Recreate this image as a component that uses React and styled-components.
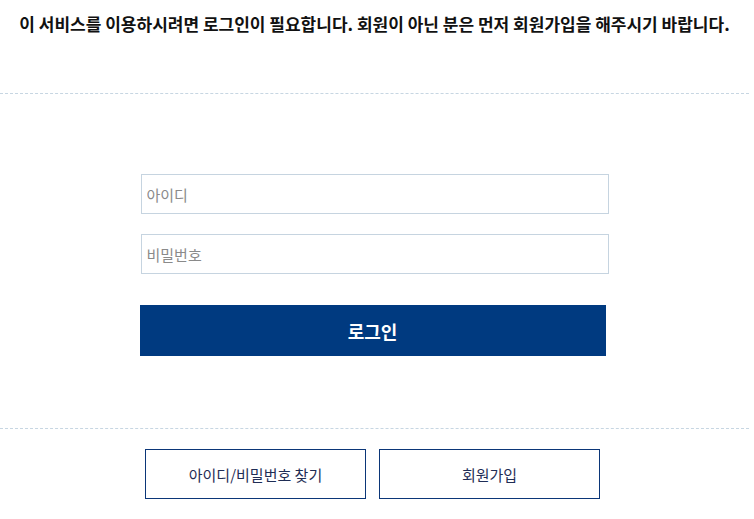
import React from "react";
import styled, { createGlobalStyle } from "styled-components";

const GlobalStyle = createGlobalStyle`
    html, body {
        margin: 0;
        padding: 0;
        background: #fff;
    }
    body {
        font-family: "Noto Sans CJK KR", "Noto Sans", sans-serif;
    }
`;

const Page = styled.div`
    width: 749px;
`;

const Notice = styled.p`
    margin: 0;
    height: 93px;
    box-sizing: border-box;
    padding-top: 11px;
    text-align: center;
    font-size: 17px;
    font-weight: 700;
    color: #111;
    line-height: 26px;
    white-space: nowrap;
`;

const Section = styled.div`
    border-top: 1px dashed #c7d6e2;
`;

const FormArea = styled.form`
    width: 468px;
    margin: 0 auto;
    padding: 80px 0 72px;
    display: flex;
    flex-direction: column;
`;

const Field = styled.input`
    width: 100%;
    height: 40px;
    box-sizing: border-box;
    border: 1px solid #c6d4e0;
    padding: 0 5px;
    margin-bottom: ${p => p.$gap}px;
    font-family: inherit;
    font-size: 15px;
    color: #333;
    outline: none;
    &::placeholder {
        color: #8a8a8a;
    }
`;

const SubmitButton = styled.button`
    width: 466px;
    height: 51px;
    margin-left: -1px;
    border: 0;
    background: #003a80;
    color: #fff;
    font-family: inherit;
    font-size: 18px;
    font-weight: 700;
    cursor: pointer;
`;

const LinkRow = styled.div`
    display: flex;
    justify-content: center;
    gap: 13px;
    padding: 20px 4px 0 0;
`;

const LinkButton = styled.button`
    width: 221px;
    height: 50px;
    box-sizing: border-box;
    border: 1px solid #0b3678;
    background: #fff;
    color: #1f2d55;
    font-family: inherit;
    font-size: 15px;
    cursor: pointer;
`;

export default function App() {
    return (
        <Page>
            <GlobalStyle />
            <Notice>
                이 서비스를 이용하시려면 로그인이 필요합니다. 회원이 아닌 분은 먼저 회원가입을 해주시기 바랍니다.
            </Notice>
            <Section>
                <FormArea onSubmit={e => e.preventDefault()}>
                    <Field type="text" placeholder="아이디" $gap={20} />
                    <Field type="password" placeholder="비밀번호" $gap={31} />
                    <SubmitButton type="submit">로그인</SubmitButton>
                </FormArea>
            </Section>
            <Section>
                <LinkRow>
                    <LinkButton type="button">아이디/비밀번호 찾기</LinkButton>
                    <LinkButton type="button">회원가입</LinkButton>
                </LinkRow>
            </Section>
        </Page>
    );
}
